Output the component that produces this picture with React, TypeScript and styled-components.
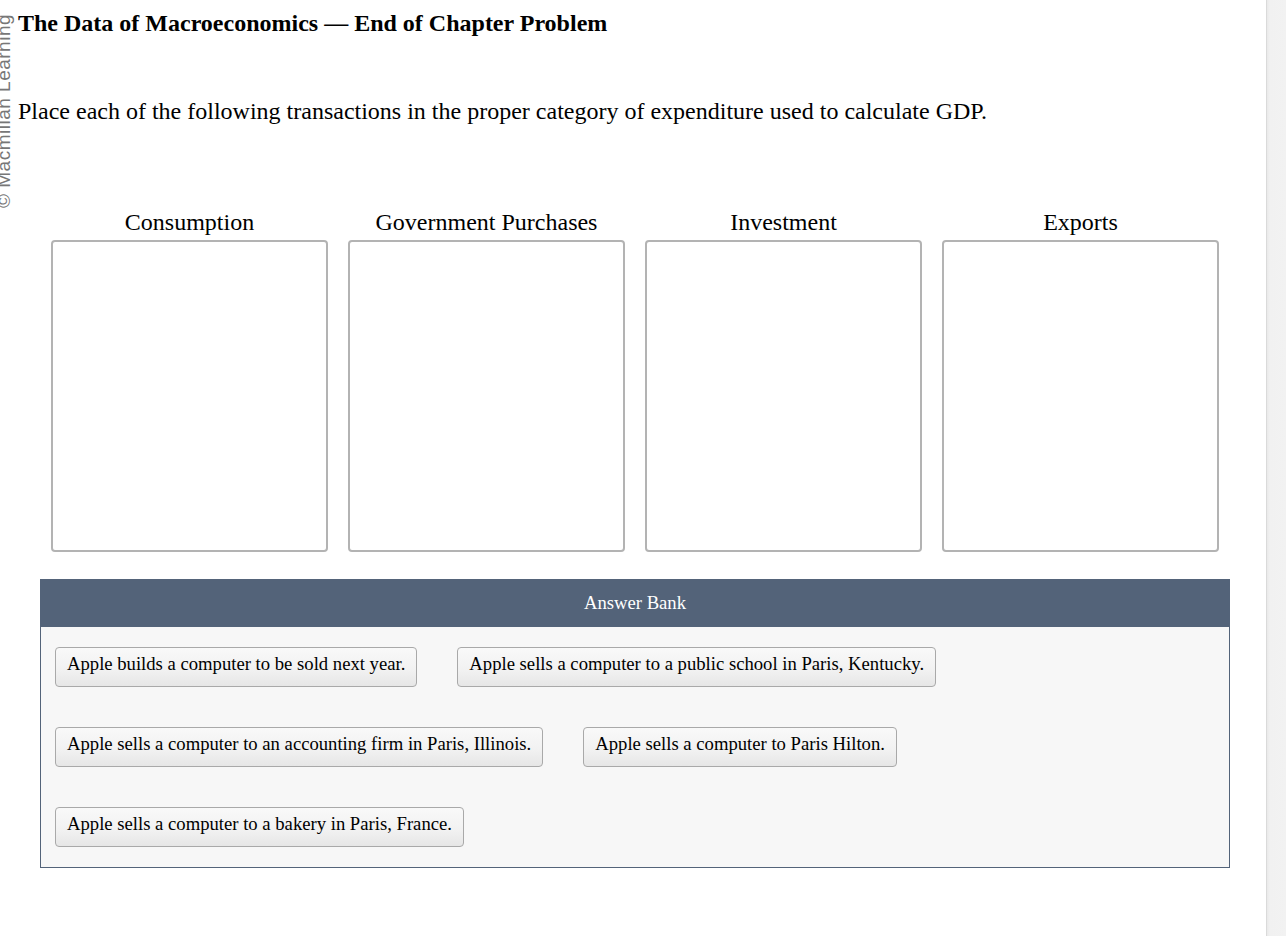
import React from "react";
import styled, { createGlobalStyle } from "styled-components";

const GlobalStyle = createGlobalStyle`
    html, body {
        margin: 0;
        padding: 0;
        background: #ffffff;
    }

    body {
        font-family: "Liberation Serif", "Times New Roman", serif;
        color: #000;
        overflow: hidden;
    }
`;

const Page = styled.div`
    display: flex;
    flex-direction: row;
    height: 936px;
`;

const Main = styled.main`
    position: relative;
    flex: 1;
    padding: 10px 0 0 18px;
    overflow: hidden;
`;

const Scrollbar = styled.div`
    width: 19px;
    border-left: 1px solid #dadada;
    background: linear-gradient(90deg, #e9e9e9 0, #f1f1f1 3px, #f2f2f2 100%);
`;

const Watermark = styled.span`
    position: absolute;
    left: -7px;
    top: 208px;
    transform-origin: 0 0;
    transform: rotate(-90deg);
    white-space: nowrap;

    font-family: "Liberation Sans", Arial, sans-serif;
    font-size: 19px;
    letter-spacing: 0.5px;
    color: #777;
`;

const Title = styled.h1`
    margin: 0;
    font-size: 24px;
    font-weight: 700;
    line-height: normal;
`;

const Prompt = styled.p`
    margin: 61px 0 0;
    font-size: 24px;
    line-height: normal;
`;

const Columns = styled.div`
    display: grid;
    grid-template-columns: repeat(4, 277px);
    column-gap: 20px;

    margin: 84px 0 0 33px;
`;

const Column = styled.div`
    display: flex;
    flex-direction: column;
    align-items: stretch;
`;

const Label = styled.div`
    font-size: 24px;
    line-height: normal;
    text-align: center;
    margin-bottom: 4px;
`;

const DropBox = styled.div`
    box-sizing: border-box;
    height: 312px;
    border: 2px solid #b3b3b3;
    border-radius: 4px;
    background: #fff;
`;

const Bank = styled.section`
    width: 1190px;
    margin: 27px 0 0 22px;
`;

const BankHeader = styled.div`
    height: 48px;
    line-height: 48px;

    background-color: #536379;
    color: #fff;
    font-size: 14pt;
    text-align: center;
`;

const BankBody = styled.div`
    display: flex;
    flex-wrap: wrap;
    gap: 40px;

    padding: 20px 14px;
    border: 1px solid #536379;
    border-top: none;
    background-color: #f7f7f7;
`;

const Chip = styled.div`
    box-sizing: border-box;
    height: 40px;
    padding: 5px 11px 0;

    border: 1px solid #a9a9a9;
    border-radius: 4px;
    background: linear-gradient(180deg, #f9f9f9 0%, #f1f1f1 60%, #e6e6e6 100%);

    font-size: 14pt;
    line-height: normal;
    white-space: nowrap;
    cursor: grab;
`;

const categories = ["Consumption", "Government Purchases", "Investment", "Exports"];

const answers = [
    "Apple builds a computer to be sold next year.",
    "Apple sells a computer to a public school in Paris, Kentucky.",
    "Apple sells a computer to an accounting firm in Paris, Illinois.",
    "Apple sells a computer to Paris Hilton.",
    "Apple sells a computer to a bakery in Paris, France.",
];

export default function App() {
    return (
        <>
            <GlobalStyle />
            <Page>
                <Main>
                    <Watermark>© Macmillan Learning</Watermark>
                    <Title>The Data of Macroeconomics — End of Chapter Problem</Title>
                    <Prompt>
                        Place each of the following transactions in the proper category of expenditure used to calculate GDP.
                    </Prompt>

                    <Columns>
                        {categories.map(c => (
                            <Column key={c}>
                                <Label>{c}</Label>
                                <DropBox />
                            </Column>
                        ))}
                    </Columns>

                    <Bank>
                        <BankHeader>Answer Bank</BankHeader>
                        <BankBody>
                            {answers.map(a => (
                                <Chip key={a}>{a}</Chip>
                            ))}
                        </BankBody>
                    </Bank>
                </Main>
                <Scrollbar />
            </Page>
        </>
    );
}
